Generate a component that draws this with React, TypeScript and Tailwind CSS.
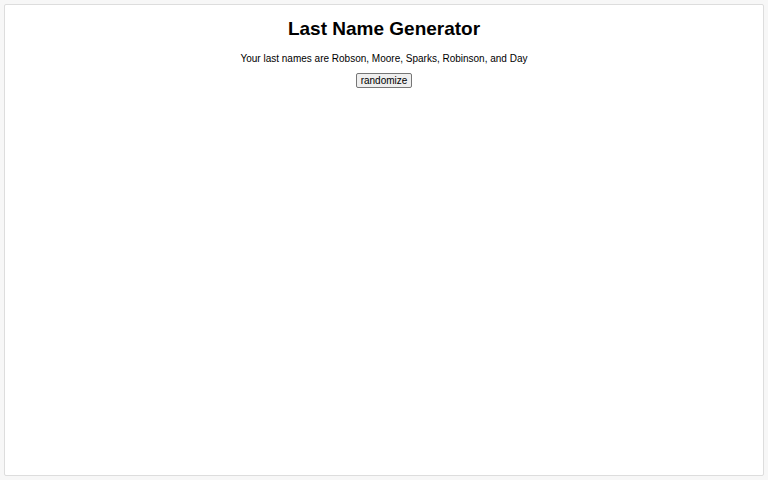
import { useState } from 'react';

const surnames = ['Robson', 'Moore', 'Sparks', 'Robinson', 'Day', 'Carter', 'Hughes', 'Bennett', 'Walsh', 'Fletcher'];

export default function App() {
  const [names, setNames] = useState(surnames.slice(0, 5));

  const randomize = () => {
    const shuffled = [...surnames].sort(() => Math.random() - 0.5);
    setNames(shuffled.slice(0, 5));
  };

  return (
    <div className="flex min-h-screen bg-[#f7f7f7] p-1 font-['Liberation_Sans',Arial,sans-serif] text-black">
      <main className="flex flex-1 flex-col items-center rounded-xs border border-[#dddddd] bg-white pt-3">
        <h1 className="text-[19px] leading-6 font-bold">Last Name Generator</h1>
        <p className="mt-3 text-[10px] leading-3">
          Your last names are {names.slice(0, -1).join(', ')}, and {names[names.length - 1]}
        </p>
        <button
          type="button"
          onClick={randomize}
          className="mt-2 rounded-xs border border-[#767676] bg-[#efefef] px-1 text-[10px] leading-[13px] hover:bg-[#e5e5e5]"
        >
          randomize
        </button>
      </main>
    </div>
  );
}
